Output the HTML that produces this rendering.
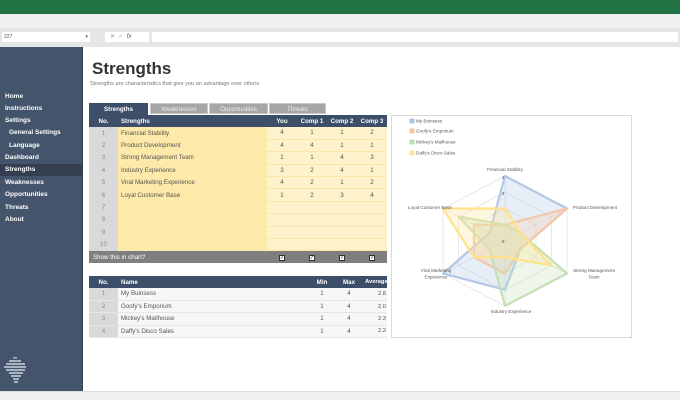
<!DOCTYPE html><html><head><style>
*{margin:0;padding:0;box-sizing:border-box}
body{width:680px;height:400px;position:relative;overflow:hidden;background:#fff;font-family:"Liberation Sans",sans-serif}
.a{position:absolute}
.side div{position:absolute;left:5px;font-size:6.5px;color:#fff;font-weight:bold}
table{border-collapse:collapse;position:absolute;font-size:6.2px;table-layout:fixed}
td{height:12.4px;padding:0 3px;white-space:nowrap;overflow:visible}
.h td{background:#3c4e68;color:#fff;font-weight:bold;height:12px}
.n{background:#d9d9d9;color:#8a8a8a;text-align:center}
.y1{background:#fde9a9;color:#555}
.y2{background:#fef2cb;color:#555;text-align:center;border-bottom:1px solid #fbe6a8}
.c{text-align:center}
.r{text-align:right;padding:0 1px 0 0!important;font-size:5.8px}
.tab{position:absolute;top:103px;height:11px;background:#a6a6a6;color:#eee;font-size:6.2px;text-align:center;line-height:11px;border:1px solid #c8c8c8}
.cb{display:inline-block;width:6px;height:6px;background:#fff;border:1px solid #333;font-size:5px;line-height:4px;color:#222}
</style></head><body>
<div class="a" style="left:0;top:0;width:680px;height:14px;background:#217346"></div>
<div class="a" style="left:0;top:14px;width:680px;height:33px;background:#f0f0f0;border-bottom:1px solid #d6d6d6"></div>
<div class="a" style="left:0;top:28px;width:680px;height:19px;background:#e6e6e6"></div>
<div class="a" style="left:2px;top:32px;width:88px;height:10px;background:#fff;font-size:5px;color:#555;padding-left:2px;line-height:10px">227<span style="float:right;padding-right:2px">▾</span></div>
<div class="a" style="left:105px;top:32px;width:44px;height:10px;background:#fff;font-size:6px;color:#999;line-height:10px;padding-left:5px">✕ &nbsp;✓ &nbsp;<i style="color:#555">fx</i></div>
<div class="a" style="left:152px;top:32px;width:526px;height:10px;background:#fff"></div>
<div class="a side" style="left:0;top:47px;width:83px;height:344px;background:#44546a;border-right:1px solid #2f3d50">
<div style="top:46px">Home</div><div style="top:58px">Instructions</div><div style="top:70px">Settings</div>
<div style="top:82px;left:9px">General Settings</div><div style="top:95px;left:9px">Language</div>
<div style="top:107px">Dashboard</div>
<div style="top:117px;left:0;width:83px;height:12px;background:#333f50;padding-left:5px;line-height:12px">Strengths</div>
<div style="top:132px">Weaknesses</div><div style="top:144px">Opportunities</div><div style="top:157px">Threats</div><div style="top:169px">About</div>
<svg style="position:absolute;left:3px;top:310px" width="24" height="30"><g fill="#a9b3c2"><rect x="10" y="0" width="4" height="1.5"/><rect x="6" y="3" width="12" height="2"/><rect x="3" y="6" width="19" height="2"/><rect x="1" y="9" width="22" height="2"/><rect x="3" y="12" width="19" height="2"/><rect x="6" y="15" width="14" height="2"/><rect x="8" y="18" width="10" height="2"/><rect x="10" y="21" width="6" height="2"/><rect x="11" y="24" width="4" height="2"/></g></svg>
</div>
<div class="a" style="left:0;top:391px;width:680px;height:9px;background:#f0f0f0;border-top:1px solid #dcdcdc"></div>
<div class="a" style="left:92px;top:59px;font-size:17px;font-weight:bold;color:#333">Strengths</div>
<div class="a" style="left:90px;top:81px;font-size:5.6px;color:#777">Strengths are characteristics that give you an advantage over others</div>
<div class="tab" style="left:89px;width:59px;background:#3c4e68;color:#fff;font-weight:bold;border-color:#3c4e68;height:13px">Strengths</div>
<div class="tab" style="left:150px;width:58px">Weaknesses</div>
<div class="tab" style="left:209px;width:59px">Opportunities</div>
<div class="tab" style="left:269px;width:57px">Threats</div>
<table style="left:89px;top:115px;width:298px">
<colgroup><col style="width:29px"><col style="width:149px"><col style="width:30px"><col style="width:30px"><col style="width:30px"><col style="width:30px"></colgroup>
<tr class="h"><td class="c">No.</td><td>Strengths</td><td class="c">You</td><td class="c">Comp 1</td><td class="c">Comp 2</td><td class="c">Comp 3</td></tr>
<tr><td class="n">1</td><td class="y1">Financial Stability</td><td class="y2">4</td><td class="y2">1</td><td class="y2">1</td><td class="y2">2</td></tr>
<tr><td class="n">2</td><td class="y1">Product Development</td><td class="y2">4</td><td class="y2">4</td><td class="y2">1</td><td class="y2">1</td></tr>
<tr><td class="n">3</td><td class="y1">Strong Management Team</td><td class="y2">1</td><td class="y2">1</td><td class="y2">4</td><td class="y2">3</td></tr>
<tr><td class="n">4</td><td class="y1">Industry Experience</td><td class="y2">3</td><td class="y2">2</td><td class="y2">4</td><td class="y2">1</td></tr>
<tr><td class="n">5</td><td class="y1">Viral Marketing Experience</td><td class="y2">4</td><td class="y2">2</td><td class="y2">1</td><td class="y2">2</td></tr>
<tr><td class="n">6</td><td class="y1">Loyal Customer Base</td><td class="y2">1</td><td class="y2">2</td><td class="y2">3</td><td class="y2">4</td></tr>
<tr><td class="n">7</td><td class="y1"></td><td class="y2"></td><td class="y2"></td><td class="y2"></td><td class="y2"></td></tr>
<tr><td class="n">8</td><td class="y1"></td><td class="y2"></td><td class="y2"></td><td class="y2"></td><td class="y2"></td></tr>
<tr><td class="n">9</td><td class="y1"></td><td class="y2"></td><td class="y2"></td><td class="y2"></td><td class="y2"></td></tr>
<tr><td class="n">10</td><td class="y1"></td><td class="y2"></td><td class="y2"></td><td class="y2"></td><td class="y2"></td></tr>
<tr style="background:#7f7f7f;color:#fff"><td colspan="2" style="padding-left:4px">Show this in chart?</td><td class="c"><span class="cb">✓</span></td><td class="c"><span class="cb">✓</span></td><td class="c"><span class="cb">✓</span></td><td class="c"><span class="cb">✓</span></td></tr>
</table>
<table style="left:89px;top:276px;width:298px;color:#555">
<colgroup><col style="width:29px"><col style="width:193px"><col style="width:22px"><col style="width:32px"><col style="width:22px"></colgroup>
<tr class="h"><td class="c">No.</td><td>Name</td><td class="c">Min</td><td class="c">Max</td><td class="r">Average</td></tr>
<tr style="background:#f7f7f7;border-bottom:1px solid #e6e6e6"><td class="n">1</td><td>My Buinsess</td><td class="c">1</td><td class="c">4</td><td class="r">2.8</td></tr>
<tr style="background:#f7f7f7;border-bottom:1px solid #e6e6e6"><td class="n">2</td><td>Goofy's Emporium</td><td class="c">1</td><td class="c">4</td><td class="r">2.0</td></tr>
<tr style="background:#f7f7f7;border-bottom:1px solid #e6e6e6"><td class="n">3</td><td>Mickey's Mailhouse</td><td class="c">1</td><td class="c">4</td><td class="r">2.3</td></tr>
<tr style="background:#f7f7f7;border-bottom:1px solid #e6e6e6"><td class="n">4</td><td>Daffy's Disco Sales</td><td class="c">1</td><td class="c">4</td><td class="r">2.2</td></tr>
</table>
<svg class="a" style="left:0;top:0" width="680" height="400" font-family="Liberation Sans" font-size="5" fill="#595959">
<rect x="391.5" y="115.5" width="240" height="222" fill="#fff" stroke="#d9d9d9"/>
<g font-size="4.6">
<rect x="410" y="119" width="4" height="4" fill="#b4c7e7" stroke="#8faadc" stroke-width=".6"/><text x="416" y="122.5">My Buinsess</text>
<rect x="410" y="129" width="4" height="4" fill="#f8cbad" stroke="#f4b183" stroke-width=".6"/><text x="416" y="132.5">Goofy's Emporium</text>
<rect x="410" y="140" width="4" height="4" fill="#c5e0b4" stroke="#a9d18e" stroke-width=".6"/><text x="416" y="143.5">Mickey's Mailhouse</text>
<rect x="410" y="151" width="4" height="4" fill="#ffe699" stroke="#ffd966" stroke-width=".6"/><text x="416" y="154.5">Daffy's Disco Sales</text>
</g>
<g fill="none" stroke="#d9d9d9" stroke-width=".6">
<polygon points="505,176 567,208.5 567,273.5 505,306 443,273.5 443,208.5"/>
<polygon points="505,192.25 551.5,216.6 551.5,265.4 505,289.75 458.5,265.4 458.5,216.6"/>
<polygon points="505,208.5 536,224.75 536,257.25 505,273.5 474,257.25 474,224.75"/>
<polygon points="505,224.75 520.5,232.9 520.5,249.1 505,257.25 489.5,249.1 489.5,232.9"/>
<path d="M505 241V176M505 241L567 208.5M505 241L567 273.5M505 241V306M505 241L443 273.5M505 241L443 208.5"/>
</g>
<g stroke-width="2.2" stroke-linejoin="round">
<polygon points="505,176 567,208.5 520.5,249.1 505,289.75 443,273.5 489.5,232.9" fill="rgba(180,199,231,.3)" stroke="#b4c7e7"/>
<polygon points="505,224.75 567,208.5 520.5,249.1 505,273.5 474,257.25 474,224.75" fill="rgba(248,203,173,.3)" stroke="#f4c7a8"/>
<polygon points="505,224.75 520.5,232.9 567,273.5 505,306 489.5,249.1 458.5,216.6" fill="rgba(197,224,180,.3)" stroke="#c5e0b4"/>
<polygon points="505,208.5 520.5,232.9 551.5,265.4 505,257.25 474,257.25 443,208.5" fill="rgba(255,230,153,.3)" stroke="#ffe38a"/>
</g>
<g font-size="4.6" text-anchor="middle">
<text x="505" y="171">Financial Stability</text>
<text x="595" y="209">Product Development</text>
<text x="594" y="272">Strong Management</text><text x="594" y="278.5">Team</text>
<text x="511" y="313">Industry Experience</text>
<text x="436" y="272">Viral Marketing</text><text x="436" y="278.5">Experience</text>
<text x="430" y="209">Loyal Customer Base</text>
<text x="503" y="179">4</text><text x="503" y="195">3</text><text x="503" y="243">0</text>
</g>
</svg>
</body></html>
